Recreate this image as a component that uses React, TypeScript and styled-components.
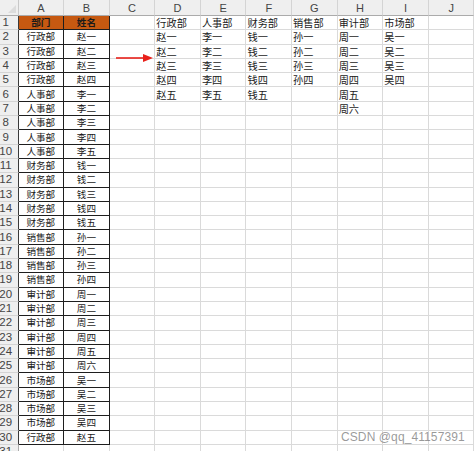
import React from 'react';
import styled, { createGlobalStyle } from 'styled-components';

const GlobalStyle = createGlobalStyle`
  html, body { margin: 0; padding: 0; background: #ffffff; }
  body { font-family: "Noto Sans CJK SC", "Noto Sans", sans-serif; }
`;

const COLS = ['A', 'B', 'C', 'D', 'E', 'F', 'G', 'H', 'I', 'J'];
const ROW_COUNT = 31;

const listA: [string, string][] = [
  ['部门', '姓名'],
  ['行政部', '赵一'], ['行政部', '赵二'], ['行政部', '赵三'], ['行政部', '赵四'],
  ['人事部', '李一'], ['人事部', '李二'], ['人事部', '李三'], ['人事部', '李四'], ['人事部', '李五'],
  ['财务部', '钱一'], ['财务部', '钱二'], ['财务部', '钱三'], ['财务部', '钱四'], ['财务部', '钱五'],
  ['销售部', '孙一'], ['销售部', '孙二'], ['销售部', '孙三'], ['销售部', '孙四'],
  ['审计部', '周一'], ['审计部', '周二'], ['审计部', '周三'], ['审计部', '周四'], ['审计部', '周五'], ['审计部', '周六'],
  ['市场部', '吴一'], ['市场部', '吴二'], ['市场部', '吴三'], ['市场部', '吴四'],
  ['行政部', '赵五'],
];

const pivot: string[][] = [
  ['行政部', '人事部', '财务部', '销售部', '审计部', '市场部'],
  ['赵一', '李一', '钱一', '孙一', '周一', '吴一'],
  ['赵二', '李二', '钱二', '孙二', '周二', '吴二'],
  ['赵三', '李三', '钱三', '孙三', '周三', '吴三'],
  ['赵四', '李四', '钱四', '孙四', '周四', '吴四'],
  ['赵五', '李五', '钱五', '', '周五', ''],
  ['', '', '', '', '周六', ''],
];

const Frame = styled.div`
  position: relative;
  width: 474px;
  height: 451px;
  overflow: hidden;
  background: #ffffff;
`;

const Sheet = styled.div`
  display: grid;
  grid-template-columns: 18.5px repeat(10, 45.6px);
  grid-template-rows: 16px repeat(${ROW_COUNT}, 14.3px);
`;

const Corner = styled.div`
  position: relative;
  background: #efefef;
  border-right: 1px solid #c8c8c8;
  border-bottom: 1px solid #ababab;
  box-sizing: border-box;
  &::after {
    content: '';
    position: absolute;
    right: 2px;
    bottom: 2px;
    border-left: 8px solid transparent;
    border-bottom: 8px solid #dcdcdc;
  }
`;

const ColHeader = styled.div`
  background: #efefef;
  border-right: 1px solid #d4d4d4;
  border-bottom: 1px solid #ababab;
  box-sizing: border-box;
  color: #444444;
  font-family: "Liberation Sans", "Noto Sans", sans-serif;
  font-size: 11px;
  line-height: 14px;
  display: flex;
  align-items: center;
  justify-content: center;
`;

const RowHeader = styled.div<{ $boxed: boolean }>`
  background: #efefef;
  border-right: 1px solid ${(p) => (p.$boxed ? '#3a3a3a' : '#ababab')};
  border-bottom: 1px solid #d4d4d4;
  box-sizing: border-box;
  color: #444444;
  font-family: "Liberation Sans", "Noto Sans", sans-serif;
  font-size: 11.5px;
  line-height: 13px;
  display: flex;
  align-items: center;
  justify-content: center;
  padding-right: 6px;
`;

type Variant = 'plain' | 'boxed' | 'title';

const Cell = styled.div<{ $variant: Variant; $align: 'left' | 'center' }>`
  box-sizing: border-box;
  border-right: 1px solid ${(p) => (p.$variant === 'plain' ? '#dadada' : '#1e1e1e')};
  border-bottom: 1px solid ${(p) => (p.$variant === 'plain' ? '#dadada' : '#1e1e1e')};
  background: ${(p) => (p.$variant === 'title' ? '#c65911' : '#ffffff')};
  color: #1a1a1a;
  font-family: "Noto Sans CJK SC", "Noto Sans", sans-serif;
  font-size: ${(p) => (p.$align === 'center' ? '9.6px' : '10.2px')};
  font-weight: ${(p) => (p.$variant === 'title' ? 700 : 400)};
  line-height: 13px;
  white-space: nowrap;
  display: flex;
  align-items: center;
  justify-content: ${(p) => (p.$align === 'center' ? 'center' : 'flex-start')};
  padding-left: ${(p) => (p.$align === 'center' ? '0' : '1px')};
`;

const Arrow = styled.svg`
  position: absolute;
  left: 115px;
  top: 53px;
`;

const Watermark = styled.div`
  position: absolute;
  left: 341px;
  top: 430px;
  font-family: "Liberation Sans", Arial, sans-serif;
  font-size: 12px;
  color: rgba(120, 120, 120, 0.75);
  letter-spacing: 0.1px;
`;

function cellValue(row: number, col: number): string {
  if (col <= 1) {
    const r = listA[row - 1];
    return r ? r[col] : '';
  }
  if (col >= 3 && col <= 8) {
    const r = pivot[row - 1];
    return r ? r[col - 3] : '';
  }
  return '';
}

export default function App() {
  const rows = Array.from({ length: ROW_COUNT }, (_, i) => i + 1);
  return (
    <Frame>
      <GlobalStyle />
      <Sheet>
        <Corner />
        {COLS.map((c) => (
          <ColHeader key={c}>{c}</ColHeader>
        ))}
        {rows.map((r) => {
          const boxed = r <= 30;
          return (
            <React.Fragment key={r}>
              <RowHeader $boxed={boxed}>{r}</RowHeader>
              {COLS.map((c, ci) => {
                const inList = ci <= 1 && boxed;
                const variant: Variant = inList ? (r === 1 ? 'title' : 'boxed') : 'plain';
                return (
                  <Cell key={c} $variant={variant} $align={ci <= 1 ? 'center' : 'left'}>
                    {cellValue(r, ci)}
                  </Cell>
                );
              })}
            </React.Fragment>
          );
        })}
      </Sheet>
      <Arrow width="40" height="10" viewBox="0 0 40 10">
        <line x1="1" y1="5" x2="30" y2="5" stroke="#e8201a" strokeWidth="1.6" />
        <polygon points="28,1 38,5 28,9" fill="#e8201a" />
      </Arrow>
      <Watermark>CSDN @qq_41157391</Watermark>
    </Frame>
  );
}
